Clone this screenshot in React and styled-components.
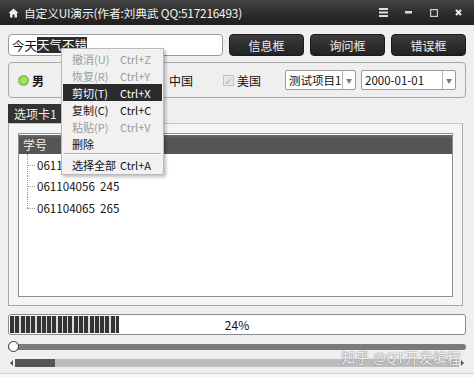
import React from 'react';
import styled, { createGlobalStyle } from 'styled-components';

const Global = createGlobalStyle`
  html, body { margin: 0; padding: 0; background: #f7f7f7; }
  body {
    font-family: "Noto Sans CJK SC", "Noto Sans", sans-serif;
    font-size: 12px;
    color: #111;
  }
`;

const Window = styled.div`
  width: 474px;
  height: 373px;
  background: #efefef;
  display: flex;
  flex-direction: column;
  border-bottom: 1px solid #d4d4d4;
`;

const TitleBar = styled.div`
  height: 25px;
  display: flex;
  align-items: center;
  padding: 0 3px 0 8px;
  background: linear-gradient(#444 0%, #2e2e2e 50%, #1f1f1f 100%);
  color: #f2f2f2;
`;

const TitleText = styled.div`
  flex: 1;
  margin-left: 5px;
  font-size: 11.8px;
  letter-spacing: -0.2px;
`;

const TitleButtons = styled.div`
  display: flex;
  align-items: center;
`;

const TitleIcon = styled.div`
  width: 25px;
  display: flex;
  justify-content: center;
`;

const Body = styled.div`
  position: relative;
  flex: 1;
  display: flex;
  flex-direction: column;
  padding: 9px 8px 0 8px;
`;

const Toolbar = styled.div`
  display: flex;
  height: 22px;
  gap: 6px;
`;

const LineEdit = styled.div`
  width: 210px;
  border: 1px solid #9a9a9a;
  border-radius: 4px;
  background: #fff;
  display: flex;
  align-items: center;
  padding-left: 3px;
  font-size: 12.5px;
`;

const Selected = styled.span`
  background: #2c2c2c;
  color: #fff;
  line-height: 16px;
`;

const DarkButton = styled.div`
  width: 75px;
  border-radius: 4px;
  background: linear-gradient(#3c3c3c, #222);
  border: 1px solid #1a1a1a;
  box-sizing: border-box;
  color: #eee;
  display: flex;
  align-items: center;
  justify-content: center;
  font-size: 12px;
`;

const GroupBox = styled.div`
  margin-top: 6px;
  width: 458px;
  height: 36px;
  box-sizing: border-box;
  border: 1px solid #a8a8a8;
  border-radius: 4px;
  display: flex;
  align-items: center;
  padding: 0 9px 0 9px;
`;

const Option = styled.div`
  display: flex;
  align-items: center;
  gap: ${p => p.$gap || 3}px;
  margin-left: ${p => p.$ml || 0}px;
  font-weight: ${p => (p.$bold ? 700 : 400)};
  white-space: nowrap;
`;

const RadioDot = styled.div`
  width: 9px;
  height: 9px;
  border-radius: 50%;
  border: 1px solid ${p => (p.$on ? '#7fb24a' : '#999')};
  background: ${p => (p.$on ? 'radial-gradient(#a6e05a 40%, #6fb33a 100%)' : '#fff')};
`;

const CheckBox = styled.div`
  width: 9px;
  height: 9px;
  border: 1px solid #c4c4c4;
  background: #e6e6e6;
  color: #a8a8a8;
  font-size: 8px;
  line-height: 9px;
  text-align: center;
`;

const Combo = styled.div`
  width: ${p => p.$w}px;
  height: 20px;
  box-sizing: border-box;
  margin-left: ${p => (p.$auto ? 'auto' : `${p.$ml}px`)};
  border: 1px solid #9a9a9a;
  border-radius: 2px;
  background: #fff;
  display: flex;
  align-items: stretch;
  font-size: 11.5px;
  white-space: nowrap;
`;

const ComboText = styled.div`
  flex: 1;
  padding-left: 3px;
  display: flex;
  align-items: center;
`;

const ComboArrow = styled.div`
  width: 12px;
  border-left: 1px solid #b5b5b5;
  display: flex;
  align-items: center;
  justify-content: center;
  color: #777;
  font-size: 6px;
`;

const TabBar = styled.div`
  margin-top: 6px;
  display: flex;
`;

const Tab = styled.div`
  width: 53px;
  height: 19px;
  background: #333;
  color: #f0f0f0;
  display: flex;
  align-items: center;
  padding-left: 6px;
  box-sizing: border-box;
`;

const TabPane = styled.div`
  width: 455px;
  height: 183px;
  box-sizing: border-box;
  border: 1px solid #a8a8a8;
  border-top-color: #c4c4c4;
  background: #f4f4f4;
  padding: 9px 9px 8px 9px;
  display: flex;
`;

const Tree = styled.div`
  flex: 1;
  border: 1px solid #8e8e8e;
  background: #fff;
`;

const TreeHeader = styled.div`
  height: 19px;
  margin-top: 1px;
  background: linear-gradient(#6a6a6a, #555 20%, #555);
  color: #f4f4f4;
  display: flex;
  align-items: center;
  padding-left: 4px;
`;

const TreeBody = styled.div`
  padding: 0 0 0 8px;
`;

const TreeRow = styled.div`
  position: relative;
  height: 21.5px;
  display: flex;
  align-items: center;
  padding-left: 10px;
  font-size: 11.6px;
  white-space: pre;
  &::before {
    content: '';
    position: absolute;
    left: 0;
    top: 50%;
    width: 8px;
    border-top: 1px dotted #999;
  }
  &::after {
    content: '';
    position: absolute;
    left: 0;
    top: 0;
    height: 100%;
    border-left: 1px dotted #999;
  }
  &:last-child::after {
    height: 50%;
  }
`;

const Progress = styled.div`
  position: relative;
  margin-top: 8px;
  width: 458px;
  height: 21px;
  box-sizing: border-box;
  border: 1px solid #8a8a8a;
  border-radius: 3px;
  background: #fff;
  padding: 1px;
  display: flex;
`;

const ProgressFill = styled.div`
  height: 100%;
  background: repeating-linear-gradient(90deg, #333 0 4px, #d8d8d8 4px 5.3px);
`;

const ProgressLabel = styled.div`
  position: absolute;
  inset: 0;
  display: flex;
  align-items: center;
  justify-content: center;
  font-size: 12px;
`;

const Slider = styled.div`
  position: relative;
  margin-top: 9px;
  width: 458px;
  height: 6px;
  border-radius: 3px;
  background: #7a7a7a;
`;

const Handle = styled.div`
  position: absolute;
  left: 0;
  top: -3px;
  width: 9px;
  height: 9px;
  border-radius: 50%;
  border: 1.5px solid #333;
  background: #fff;
`;

const ScrollBar = styled.div`
  margin-top: 9px;
  width: 458px;
  height: 8px;
  display: flex;
  align-items: center;
`;

const ScrollArrow = styled.div`
  width: 0;
  height: 0;
  border-top: 3px solid transparent;
  border-bottom: 3px solid transparent;
  ${p => (p.$right ? 'border-left: 3px solid #555;' : 'border-right: 3px solid #555;')}
  margin: 0 2px;
`;

const ScrollTrack = styled.div`
  flex: 1;
  height: 100%;
  background: #bdbdbd;
  display: flex;
`;

const ScrollThumb = styled.div`
  width: 40px;
  background: #555;
`;

const ContextMenu = styled.div`
  position: absolute;
  left: 61px;
  top: 23px;
  width: 101px;
  padding: 1px 0;
  background: #f1f1f1;
  border: 1px solid #b9b9b9;
  box-shadow: 2px 2px 3px rgba(0, 0, 0, 0.25);
  font-size: 11px;
`;

const MenuItem = styled.div`
  height: 17px;
  display: grid;
  grid-template-columns: 48px 1fr;
  align-items: center;
  padding-left: 9px;
  margin: 0 1px;
  white-space: nowrap;
  color: ${p => (p.$active ? '#fff' : p.$disabled ? '#9c9c9c' : '#111')};
  background: ${p => (p.$active ? '#2b2b2b' : 'transparent')};
`;

const Separator = styled.div`
  margin: 1px 2px;
  border-top: 1px solid #b0b0b0;
  border-bottom: 1px solid #fff;
`;

const Watermark = styled.div`
  position: absolute;
  right: 13px;
  bottom: 6px;
  font-size: 13.5px;
  color: rgba(255, 255, 255, 0.9);
  text-shadow: 0 0 1px #777, 0 0 2px #999;
  letter-spacing: 0.5px;
`;

const menu = [
  { label: '撤消(U)', key: 'Ctrl+Z', disabled: true },
  { label: '恢复(R)', key: 'Ctrl+Y', disabled: true },
  { label: '剪切(T)', key: 'Ctrl+X', active: true },
  { label: '复制(C)', key: 'Ctrl+C' },
  { label: '粘贴(P)', key: 'Ctrl+V', disabled: true },
  { label: '删除', key: '' },
  null,
  { label: '选择全部', key: 'Ctrl+A' },
];

const rows = ['0611', '061104056  245', '061104065  265'];

function HomeIcon() {
  return (
    <svg width="11" height="10" viewBox="0 0 11 10">
      <path d="M5.5 0.5 L0.5 5 L2 5 L2 9.5 L4.5 9.5 L4.5 6.5 L6.5 6.5 L6.5 9.5 L9 9.5 L9 5 L10.5 5 Z" fill="#eee" />
    </svg>
  );
}

function WindowControls() {
  return (
    <TitleButtons>
      <TitleIcon>
        <svg width="9" height="9" viewBox="0 0 9 9">
          <rect x="0" y="0" width="9" height="2" fill="#ddd" />
          <rect x="0" y="3.5" width="9" height="2" fill="#ddd" />
          <rect x="0" y="7" width="9" height="2" fill="#ddd" />
        </svg>
      </TitleIcon>
      <TitleIcon>
        <svg width="7" height="3" viewBox="0 0 7 3">
          <rect x="0" y="0" width="7" height="2.5" fill="#ddd" />
        </svg>
      </TitleIcon>
      <TitleIcon>
        <svg width="8" height="8" viewBox="0 0 8 8">
          <rect x="0.6" y="0.6" width="6.8" height="6.8" fill="none" stroke="#ccc" strokeWidth="1.2" />
        </svg>
      </TitleIcon>
      <TitleIcon>
        <svg width="7" height="7" viewBox="0 0 7 7">
          <path d="M1 1 L6 6 M6 1 L1 6" stroke="#eee" strokeWidth="2" />
        </svg>
      </TitleIcon>
    </TitleButtons>
  );
}

export default function App() {
  return (
    <Window>
      <Global />
      <TitleBar>
        <HomeIcon />
        <TitleText>自定义UI演示(作者:刘典武 QQ:517216493)</TitleText>
        <WindowControls />
      </TitleBar>
      <Body>
        <Toolbar>
          <LineEdit>
            今天<Selected>天气不错</Selected>
          </LineEdit>
          <DarkButton>信息框</DarkButton>
          <DarkButton>询问框</DarkButton>
          <DarkButton>错误框</DarkButton>
        </Toolbar>

        <GroupBox>
          <Option $bold>
            <RadioDot $on />男
          </Option>
          <Option $ml={104} $gap={10}>
            <CheckBox />中国
          </Option>
          <Option $ml={30}>
            <CheckBox>✓</CheckBox>美国
          </Option>
          <Combo $w={71} $auto>
            <ComboText>测试项目1</ComboText>
            <ComboArrow>▼</ComboArrow>
          </Combo>
          <Combo $w={95} $ml={5}>
            <ComboText>2000-01-01</ComboText>
            <ComboArrow>▼</ComboArrow>
          </Combo>
        </GroupBox>

        <TabBar>
          <Tab>选项卡1</Tab>
        </TabBar>
        <TabPane>
          <Tree>
            <TreeHeader>学号</TreeHeader>
            <TreeBody>
              {rows.map(r => (
                <TreeRow key={r}>{r}</TreeRow>
              ))}
            </TreeBody>
          </Tree>
        </TabPane>

        <Progress>
          <ProgressFill style={{ width: '24%' }} />
          <ProgressLabel>24%</ProgressLabel>
        </Progress>

        <Slider>
          <Handle />
        </Slider>

        <ScrollBar>
          <ScrollArrow />
          <ScrollTrack>
            <ScrollThumb />
          </ScrollTrack>
          <ScrollArrow $right />
        </ScrollBar>

        <ContextMenu>
          {menu.map((m, i) =>
            m ? (
              <MenuItem key={i} $active={m.active} $disabled={m.disabled}>
                <span>{m.label}</span>
                <span>{m.key}</span>
              </MenuItem>
            ) : (
              <Separator key={i} />
            )
          )}
        </ContextMenu>

        <Watermark>知乎 @QT开发编程</Watermark>
      </Body>
    </Window>
  );
}
